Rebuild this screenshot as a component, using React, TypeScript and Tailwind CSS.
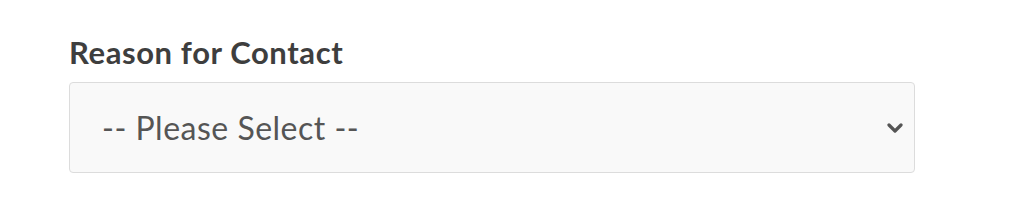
export default function App() {
  return (
    <div className="w-[1024px] h-[217px] bg-white font-['Lato','Noto_Sans',sans-serif]">
      <div className="pl-[69px] pt-[34px] w-[915px]">
        <label
          htmlFor="reason"
          className="block text-[31px] leading-[1.2] font-bold text-[#3e3e3e] tracking-[0.6px]"
        >
          Reason for Contact
        </label>
        <div className="relative mt-[11px]">
          <select
            id="reason"
            defaultValue=""
            className="block w-full h-[91px] appearance-none rounded-[4px] border border-[#dcdcdc] bg-[#f9f9f9] pl-[32px] pr-[60px] text-[32px] tracking-[0.5px] text-[#555] outline-none font-['Lato',sans-serif]"
          >
            <option value="">-- Please Select --</option>
          </select>
          <svg
            className="pointer-events-none absolute right-[12px] top-1/2 -translate-y-1/2"
            width="16"
            height="12"
            viewBox="0 0 16 12"
          >
            <path d="M2 3 L8 9 L14 3" fill="none" stroke="#555" strokeWidth="3.2" strokeLinecap="round" strokeLinejoin="round" />
          </svg>
        </div>
      </div>
    </div>
  );
}
